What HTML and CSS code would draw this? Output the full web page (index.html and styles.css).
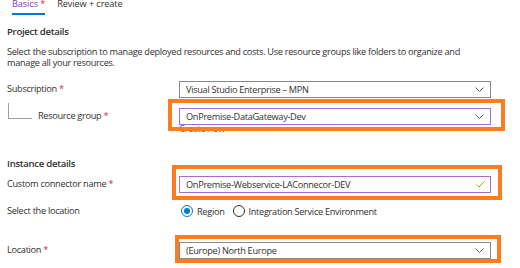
FILE: index.html
```html
<!DOCTYPE html>
<html>
<head>
<meta charset="utf-8">
<link rel="stylesheet" href="styles.css">
</head>
<body>
<div class="page">
  <div class="tabs">
    <div class="tab active">Basics <span class="req">*</span></div>
    <div class="tab">Review + create</div>
  </div>

  <h2 class="section s-project">Project details</h2>
  <p class="desc">Select the subscription to manage deployed resources and costs. Use resource groups like folders to organize and<br>manage all your resources.</p>

  <div class="row r-sub">
    <div class="label">Subscription <span class="req">*</span></div>
    <div class="control">
      <div class="field">
        <div class="select">Visual Studio Enterprise – MPN
          <svg class="chev" width="9" height="5" viewBox="0 0 9 5"><path d="M0.5 0.5 L4.5 4.5 L8.5 0.5" fill="none" stroke="#605e5c" stroke-width="1"/></svg>
        </div>
      </div>
    </div>
  </div>

  <div class="row r-rg">
    <div class="label nested"><span class="tree"></span><span>Resource group <span class="req">*</span></span></div>
    <div class="control">
      <div class="field">
        <div class="select purple">OnPremise-DataGateway-Dev
          <svg class="chev" width="9" height="5" viewBox="0 0 9 5"><path d="M0.5 0.5 L4.5 4.5 L8.5 0.5" fill="none" stroke="#605e5c" stroke-width="1"/></svg>
        </div>
        <div class="hl hl-rg"></div>
      </div>
      <a class="link">Create new</a>
    </div>
  </div>

  <h2 class="section s-instance">Instance details</h2>

  <div class="row r-name">
    <div class="label">Custom connector name <span class="req">*</span></div>
    <div class="control">
      <div class="field">
        <div class="select purple">OnPremise-Webservice-LAConnecor-DEV
          <svg class="check" width="9" height="7" viewBox="0 0 9 7"><path d="M0.5 3.5 L3 6 L8.5 0.5" fill="none" stroke="#7fba00" stroke-width="1"/></svg>
        </div>
        <div class="hl hl-name"></div>
      </div>
    </div>
  </div>

  <div class="row r-radio">
    <div class="label">Select the location</div>
    <div class="control radios">
      <span class="radio on"></span><span class="rlabel">Region</span>
      <span class="radio"></span><span class="rlabel">Integration Service Environment</span>
    </div>
  </div>

  <div class="row r-loc">
    <div class="label">Location <span class="req">*</span></div>
    <div class="control">
      <div class="field">
        <div class="select">(Europe) North Europe
          <svg class="chev" width="9" height="5" viewBox="0 0 9 5"><path d="M0.5 0.5 L4.5 4.5 L8.5 0.5" fill="none" stroke="#605e5c" stroke-width="1"/></svg>
        </div>
        <div class="hl hl-loc"></div>
      </div>
    </div>
  </div>
</div>
</body>
</html>
```

FILE: styles.css
```css
* { box-sizing: border-box; }
html, body { margin: 0; padding: 0; background: #ffffff; }
body {
  width: 520px;
  height: 268px;
  overflow: hidden;
  font-family: "Open Sans", "Noto Sans", sans-serif;
  font-size: 9.2px;
  letter-spacing: -0.3px;
  color: #323130;
}
.page { padding-left: 7px; }

.tabs {
  display: flex;
  gap: 12px;
  margin-top: -2px;
  margin-left: 5px;
}
.tab {
  line-height: 12px;
  height: 17px;
  padding-bottom: 3px;
  border-bottom: 2px solid transparent;
  color: #323130;
  letter-spacing: -0.1px;
}
.tab.active {
  color: #8a3ab9;
  border-bottom-color: #0078d4;
}
.req { color: #c4314b; }

.section {
  margin: 0;
  font-size: 9.6px;
  font-weight: 600;
  line-height: 12px;
  color: #323130;
}
.s-project { margin-top: 11px; }
.s-instance { margin-top: 24px; }

.desc {
  margin: 8px 0 0 0;
  line-height: 11px;
}

.row {
  display: grid;
  grid-template-columns: 172px 312px;
  align-items: start;
}
.r-sub { margin-top: 13px; }
.r-rg { margin-top: 10px; }
.r-name { margin-top: 6px; }
.r-radio { margin-top: 10px; align-items: center; }
.r-loc { margin-top: 23px; }

.label {
  line-height: 16px;
  color: #323130;
}
.label.nested {
  display: flex;
  align-items: center;
  padding-left: 1px;
}
.tree {
  display: block;
  width: 24px;
  height: 16px;
  margin-top: -11px;
  margin-right: 6px;
  border-left: 1px solid #a19f9d;
  border-bottom: 1px solid #a19f9d;
}

.field { position: relative; }
.select {
  position: relative;
  height: 17px;
  line-height: 15px;
  border: 1px solid #8a8886;
  padding-left: 6px;
  background: #fff;
}
.select.purple { border-color: #a96bd0; }
.chev {
  position: absolute;
  right: 6px;
  top: 5px;
}
.check {
  position: absolute;
  right: 5px;
  top: 4px;
}

.hl {
  position: absolute;
  border: 4px solid #fb7d21;
  z-index: 2;
  pointer-events: none;
}
.hl-rg { left: -11px; top: -9px; right: -14px; bottom: -6px; }
.hl-name { left: -7px; top: -11px; right: -11px; bottom: -7px; }
.hl-loc { left: -4px; top: -7px; right: -10px; bottom: -4px; }

.link {
  display: block;
  margin-top: -1px;
  line-height: 10px;
  color: #0078d4;
  position: relative;
  z-index: 1;
}

.radios {
  display: flex;
  align-items: center;
  height: 14px;
  padding-left: 2px;
}
.radio {
  width: 12px;
  height: 12px;
  border-radius: 50%;
  border: 1px solid #323130;
  position: relative;
  flex: none;
}
.radio.on { border-color: #0078d4; }
.radio.on::after {
  content: "";
  position: absolute;
  left: 2px; top: 2px;
  width: 6px; height: 6px;
  border-radius: 50%;
  background: #0078d4;
}
.rlabel { margin-left: 4px; margin-right: 8px; }
```
